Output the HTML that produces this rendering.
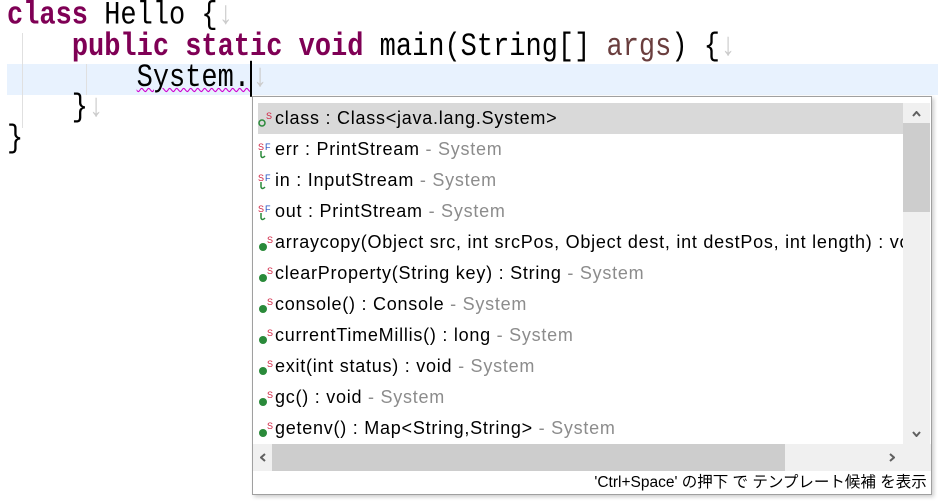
<!DOCTYPE html>
<html><head><meta charset="utf-8"><style>
body{margin:0;width:938px;height:503px;background:#fff;position:relative;overflow:hidden;font-family:"Liberation Sans","Noto Sans CJK JP",sans-serif}
.code{position:absolute;left:7px;font-family:"Liberation Mono",monospace;font-size:27px;line-height:25.83px;white-space:pre;color:#000;transform:scaleY(1.2);transform-origin:0 0}
.k{color:#7f0055;font-weight:bold}
.a{color:#6a3e3e}
.r{color:#ccc}
.hl{position:absolute;left:7px;top:64px;width:931px;height:31px;background:#e8f2fe}
.guide{position:absolute;width:1px;background:#e0e0e0}
.pop{position:absolute;left:252px;top:96px;width:678px;height:397px;border:1px solid #a0a0a0;background:#fff;box-shadow:2px 2px 4px rgba(0,0,0,.2)}
.row{position:absolute;left:5px;width:645px;height:31px;font-size:18px;letter-spacing:0.75px;line-height:31px;white-space:nowrap;overflow:hidden;color:#000}
.row .g{color:#8c8c8c}
.sel{background:#d9d9d9}
.ic{display:inline-block;width:17px;position:relative;height:20px;vertical-align:middle;letter-spacing:0}
.vs{position:absolute;left:650px;top:6px;width:27px;height:341px;background:#f0f0f0}
.hs{position:absolute;left:0;top:347px;width:650px;height:27px;background:#f0f0f0}
.st{position:absolute;left:0;top:374px;width:678px;height:23px;font-size:15.5px;line-height:23px;text-align:right;color:#000}
</style></head><body>
<div class="hl"></div>
<div class="guide" style="left:22px;top:33px;height:95px"></div>
<div class="guide" style="left:86px;top:64px;height:31px"></div>
<div class="code" style="top:2px"><span class="k">class</span> Hello {<span class="r">↓</span>
    <span class="k">public</span> <span class="k">static</span> <span class="k">void</span> main(String[] <span class="a">args</span>) {<span class="r">↓</span>
        <span style="text-decoration:underline wavy #d000d0;text-decoration-thickness:1px">System.</span><span style="border-left:2px solid #000"></span><span class="r">↓</span>
    }<span class="r">↓</span>
}</div>
<div class="pop">
<div class="row sel" style="top:6px"><span class="ic"><svg width="17" height="20"><circle cx="4" cy="13" r="3" fill="none" stroke="#2a8a3a" stroke-width="1.5"/><text x="8" y="9" font-size="9" fill="#d02040" font-family="Liberation Sans">S</text></svg></span>class : Class&lt;java.lang.System&gt;</div>
<div class="row" style="top:37px"><span class="ic"><svg width="17" height="20"><text x="0" y="9" font-size="9" fill="#d02040">S</text><text x="7" y="9" font-size="9" fill="#2050c0">F</text><path d="M3 10 v5 q1 3 4 0" fill="none" stroke="#2a8a3a" stroke-width="1.5"/></svg></span>err : PrintStream <span class="g">- System</span></div>
<div class="row" style="top:68px"><span class="ic"><svg width="17" height="20"><text x="0" y="9" font-size="9" fill="#d02040">S</text><text x="7" y="9" font-size="9" fill="#2050c0">F</text><path d="M3 10 v5 q1 3 4 0" fill="none" stroke="#2a8a3a" stroke-width="1.5"/></svg></span>in : InputStream <span class="g">- System</span></div>
<div class="row" style="top:99px"><span class="ic"><svg width="17" height="20"><text x="0" y="9" font-size="9" fill="#d02040">S</text><text x="7" y="9" font-size="9" fill="#2050c0">F</text><path d="M3 10 v5 q1 3 4 0" fill="none" stroke="#2a8a3a" stroke-width="1.5"/></svg></span>out : PrintStream <span class="g">- System</span></div>
<div class="row" style="top:130px"><span class="ic"><svg width="17" height="20"><circle cx="5" cy="13" r="4" fill="#2a8a3a"/><text x="9" y="9" font-size="9" fill="#d02040">S</text></svg></span>arraycopy(Object src, int srcPos, Object dest, int destPos, int length) : void</div>
<div class="row" style="top:161px"><span class="ic"><svg width="17" height="20"><circle cx="5" cy="13" r="4" fill="#2a8a3a"/><text x="9" y="9" font-size="9" fill="#d02040">S</text></svg></span>clearProperty(String key) : String <span class="g">- System</span></div>
<div class="row" style="top:192px"><span class="ic"><svg width="17" height="20"><circle cx="5" cy="13" r="4" fill="#2a8a3a"/><text x="9" y="9" font-size="9" fill="#d02040">S</text></svg></span>console() : Console <span class="g">- System</span></div>
<div class="row" style="top:223px"><span class="ic"><svg width="17" height="20"><circle cx="5" cy="13" r="4" fill="#2a8a3a"/><text x="9" y="9" font-size="9" fill="#d02040">S</text></svg></span>currentTimeMillis() : long <span class="g">- System</span></div>
<div class="row" style="top:254px"><span class="ic"><svg width="17" height="20"><circle cx="5" cy="13" r="4" fill="#2a8a3a"/><text x="9" y="9" font-size="9" fill="#d02040">S</text></svg></span>exit(int status) : void <span class="g">- System</span></div>
<div class="row" style="top:285px"><span class="ic"><svg width="17" height="20"><circle cx="5" cy="13" r="4" fill="#2a8a3a"/><text x="9" y="9" font-size="9" fill="#d02040">S</text></svg></span>gc() : void <span class="g">- System</span></div>
<div class="row" style="top:316px;height:31px"><span class="ic"><svg width="17" height="20"><circle cx="5" cy="13" r="4" fill="#2a8a3a"/><text x="9" y="9" font-size="9" fill="#d02040">S</text></svg></span>getenv() : Map&lt;String,String&gt; <span class="g">- System</span></div>
<div class="vs"><div style="position:absolute;left:0;top:20px;width:27px;height:89px;background:#cdcdcd"></div>
<svg style="position:absolute;left:9px;top:8px" width="9" height="6"><path d="M1 5 L4.5 1 L8 5" fill="none" stroke="#606060" stroke-width="2"/></svg>
<svg style="position:absolute;left:9px;top:328px" width="9" height="6"><path d="M1 1 L4.5 5 L8 1" fill="none" stroke="#606060" stroke-width="2"/></svg></div>
<div class="hs"><div style="position:absolute;left:19px;top:0;width:513px;height:27px;background:#cdcdcd"></div>
<svg style="position:absolute;left:7px;top:9px" width="6" height="9"><path d="M5 1 L1 4.5 L5 8" fill="none" stroke="#606060" stroke-width="2"/></svg>
<svg style="position:absolute;left:636px;top:9px" width="6" height="9"><path d="M1 1 L5 4.5 L1 8" fill="none" stroke="#606060" stroke-width="2"/></svg></div>
<div style="position:absolute;left:650px;top:347px;width:28px;height:27px;background:#f0f0f0"></div>
<div class="st">'Ctrl+Space' の押下 で テンプレート候補 を表示&nbsp;</div>
</div>
</body></html>
